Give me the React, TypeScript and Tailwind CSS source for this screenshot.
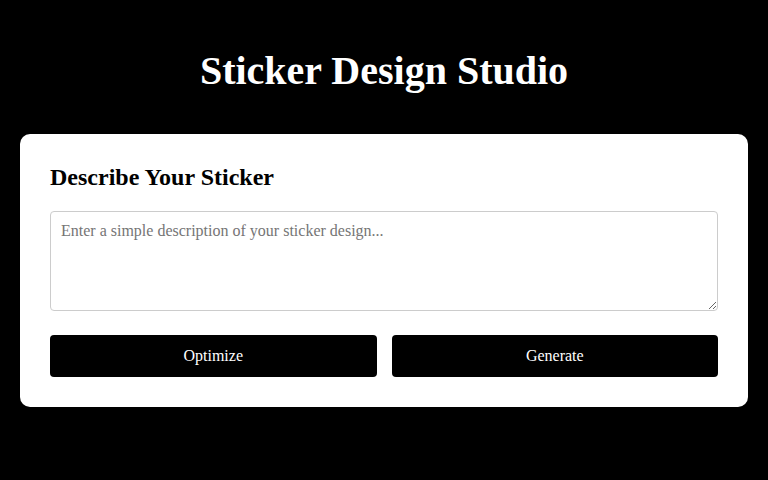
export default function App() {
  return (
    <div className="min-h-[480px] bg-black px-5 pt-[48px] pb-5 font-['Liberation_Serif',serif]">
      <h1 className="mb-[40px] text-center text-[40px] font-bold leading-[46px] text-white">
        Sticker Design Studio
      </h1>
      <div className="rounded-[10px] bg-white p-[30px]">
        <h2 className="mb-5 text-[24px] font-bold leading-[27px] text-black">Describe Your Sticker</h2>
        <textarea
          className="mb-6 block h-[100px] w-full resize-y rounded-[4px] border border-[#ccc] p-[10px] text-[16px] leading-[18px] text-black placeholder:text-[#757575] focus:outline-none"
          placeholder="Enter a simple description of your sticker design..."
        />
        <div className="flex gap-[15px]">
          <button className="h-[42px] flex-1 rounded-[4px] bg-black text-[16px] text-white">Optimize</button>
          <button className="h-[42px] flex-1 rounded-[4px] bg-black text-[16px] text-white">Generate</button>
        </div>
      </div>
    </div>
  );
}
